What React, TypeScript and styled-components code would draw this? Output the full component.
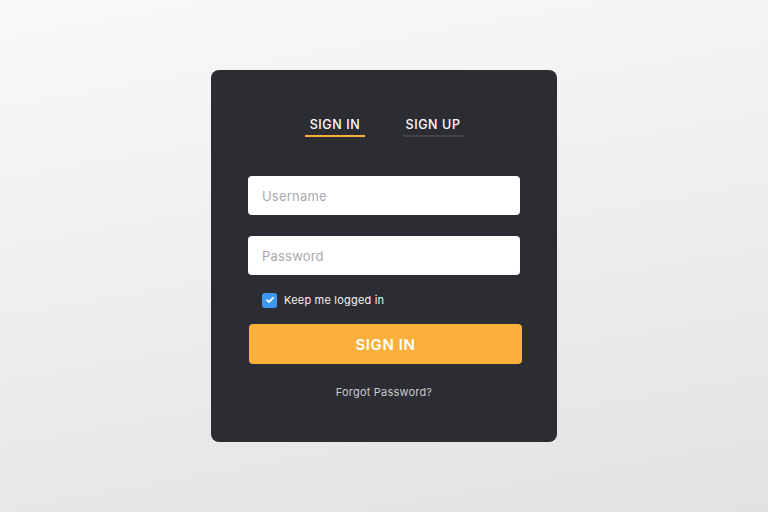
import React, { useState } from 'react';
import styled, { createGlobalStyle } from 'styled-components';

const GlobalStyle = createGlobalStyle`
  html, body {
    margin: 0;
    padding: 0;
    height: 100%;
  }
  body {
    font-family: Inter, "Open Sans", sans-serif;
  }
  #root {
    height: 100%;
  }
`;

const Page = styled.div`
  width: 100%;
  height: 100%;
  display: flex;
  align-items: center;
  justify-content: center;
  background: linear-gradient(170deg, #f9f9f9 0%, #eeeeee 50%, #e2e2e2 100%);
`;

const Card = styled.div`
  width: 346px;
  box-sizing: border-box;
  padding: 47px 37px 42px;
  background: #2c2d32;
  border-radius: 8px;
  display: flex;
  flex-direction: column;
`;

const Tabs = styled.div`
  display: flex;
  justify-content: center;
  gap: 38px;
  margin-bottom: 39px;
`;

const Tab = styled.button<{ active?: boolean }>`
  background: none;
  border: none;
  padding: 0 0 2px;
  width: 60px;
  font-family: inherit;
  font-size: 12.5px;
  font-weight: 500;
  letter-spacing: 0.6px;
  line-height: 16px;
  color: #ffffff;
  cursor: pointer;
  border-bottom: 2px solid ${p => (p.active ? '#fbb03b' : '#44454b')};
`;

const Input = styled.input`
  height: 39px;
  box-sizing: border-box;
  border: none;
  border-radius: 4px;
  background: #ffffff;
  padding: 0 14px;
  font-family: inherit;
  font-size: 13px;
  letter-spacing: 0.2px;
  color: #333;
  outline: none;

  &::placeholder {
    color: #a9a9ad;
  }

  & + & {
    margin-top: 21px;
  }
`;

const RememberRow = styled.label`
  display: flex;
  align-items: center;
  gap: 7px;
  margin: 17px 0 16px 14px;
  font-size: 11px;
  letter-spacing: 0.2px;
  color: #f2f2f2;
  cursor: pointer;
  line-height: 16px;
`;

const Check = styled.span<{ checked: boolean }>`
  width: 15px;
  height: 15px;
  border-radius: 3px;
  background: ${p => (p.checked ? '#3b97f0' : '#ffffff')};
  display: flex;
  align-items: center;
  justify-content: center;
`;

const SubmitButton = styled.button`
  height: 40px;
  margin: 0 -2px 0 1px;
  border: none;
  border-radius: 4px;
  background: #fbb03b;
  color: #ffffff;
  font-family: inherit;
  font-size: 15px;
  font-weight: 600;
  letter-spacing: 0.6px;
  cursor: pointer;
`;

const ForgotLink = styled.a`
  margin-top: 20px;
  text-align: center;
  font-size: 11px;
  letter-spacing: 0.2px;
  line-height: 16px;
  color: #c9c9cc;
  text-decoration: none;
  cursor: pointer;
`;

export default function App() {
  const [tab, setTab] = useState<'in' | 'up'>('in');
  const [remember, setRemember] = useState(true);

  return (
    <>
      <GlobalStyle />
      <Page>
        <Card>
          <Tabs>
            <Tab active={tab === 'in'} onClick={() => setTab('in')}>SIGN IN</Tab>
            <Tab active={tab === 'up'} onClick={() => setTab('up')}>SIGN UP</Tab>
          </Tabs>
          <Input placeholder="Username" />
          <Input type="password" placeholder="Password" />
          <RememberRow onClick={() => setRemember(!remember)}>
            <Check checked={remember}>
              {remember && (
                <svg width="10" height="10" viewBox="0 0 10 10" fill="none">
                  <path d="M2 5.2l2 2 4-4.4" stroke="#fff" strokeWidth="1.8" strokeLinecap="round" strokeLinejoin="round" />
                </svg>
              )}
            </Check>
            Keep me logged in
          </RememberRow>
          <SubmitButton>SIGN IN</SubmitButton>
          <ForgotLink>Forgot Password?</ForgotLink>
        </Card>
      </Page>
    </>
  );
}
